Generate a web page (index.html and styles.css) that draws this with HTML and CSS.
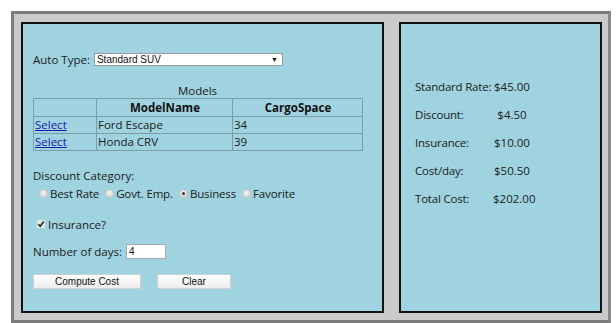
FILE: index.html
```html
<!DOCTYPE html>
<html>
<head>
<meta charset="utf-8">
<link rel="stylesheet" href="styles.css">
</head>
<body>
<div class="frame">
  <div class="panel left">
    <div class="auto-row">
      <span class="lbl">Auto Type:</span>
      <div class="select"><span>Standard SUV</span><span class="arrow">▼</span></div>
    </div>
    <div class="caption">Models</div>
    <table class="models">
      <colgroup><col class="c1"><col class="c2"><col class="c3"></colgroup>
      <tr class="head"><th></th><th>ModelName</th><th>CargoSpace</th></tr>
      <tr><td><a href="#">Select</a></td><td>Ford Escape</td><td>34</td></tr>
      <tr><td><a href="#">Select</a></td><td>Honda CRV</td><td>39</td></tr>
    </table>
    <div class="disc-label">Discount Category:</div>
    <div class="radios">
      <span class="radio"></span><span class="rtext">Best Rate</span>
      <span class="radio"></span><span class="rtext">Govt. Emp.</span>
      <span class="radio on"></span><span class="rtext">Business</span>
      <span class="radio"></span><span class="rtext">Favorite</span>
    </div>
    <div class="ins-row">
      <span class="check"><svg width="8" height="8" viewBox="0 0 8 8"><path d="M1.3 4.2 L3.2 6.2 L6.8 1.5" fill="none" stroke="#222" stroke-width="1.6"/></svg></span>
      <span>Insurance?</span>
    </div>
    <div class="days-row">
      <span>Number of days:</span>
      <div class="input">4</div>
    </div>
    <div class="btn-row">
      <div class="btn compute">Compute Cost</div>
      <div class="btn clear">Clear</div>
    </div>
  </div>
  <div class="panel right">
    <div class="costs">
      <span>Standard Rate:</span><span class="val">$45.00</span>
      <span>Discount:</span><span class="val">$4.50</span>
      <span>Insurance:</span><span class="val">$10.00</span>
      <span>Cost/day:</span><span class="val">$50.50</span>
      <span>Total Cost:</span><span class="val">$202.00</span>
    </div>
  </div>
</div>
</body>
</html>
```
FILE: styles.css
```css
html, body { margin: 0; padding: 0; background: #fff; }
body {
  font-family: "Open Sans", "Noto Sans", sans-serif;
  font-size: 11.5px;
  color: #202020;
}
.frame {
  margin: 11px 0 0 11px;
  width: 600px;
  height: 312px;
  box-sizing: border-box;
  border: 3px solid #7c7c7c;
  border-right-color: #8a8a8a;
  background: #cacaca;
  padding: 8px 6px 0 7px;
  display: flex;
  gap: 15px;
}
.panel {
  background: #9fd3e0;
  border: 2px solid #111;
  height: 291px;
  box-sizing: border-box;
  flex: none;
}
.left { width: 363px; padding: 27px 0 0 10px; }
.right { width: 203px; padding: 49px 0 0 14px; }

.auto-row { display: flex; align-items: center; height: 16px; }
.auto-row .lbl { margin-right: 4px; }
.select {
  width: 189px; height: 13px; box-sizing: border-box;
  background: #fff; border: 1px solid #9a9a9a;
  display: flex; align-items: center; justify-content: space-between;
  font-family: "Liberation Sans", Arial, sans-serif; font-size: 10px; color: #111;
  padding: 0 4px 0 2px;
}
.arrow { font-size: 7px; }

.caption { margin-top: 17px; height: 14px; line-height: 14px; width: 329px; text-align: center; }
.models {
  border-collapse: collapse; width: 329px; table-layout: fixed;
  border: 1px solid #7d9cab;
}
.models col.c1 { width: 63px; }
.models col.c2 { width: 136px; }
.models col.c3 { width: 130px; }
.models th, .models td {
  border: 1px solid #7d9cab; padding: 0 0 0 1px; text-align: left;
  height: 16px; line-height: 16px; font-size: 11.5px;
}
.models tr.head th { height: 17px; font-weight: bold; text-align: center; color: #111; }
.models a { color: #1c1ca8; text-decoration: underline; }

.disc-label { margin-top: 17px; height: 16px; line-height: 16px; }
.radios { margin-top: 1px; height: 16px; display: flex; align-items: center; padding-left: 6px; white-space: nowrap; }
.radio {
  width: 9px; height: 9px; box-sizing: border-box; border-radius: 50%;
  background: radial-gradient(circle at 50% 40%, #f4f4f4, #cfcfcf);
  border: 1px solid #c4c4c4; margin-right: 2px; position: relative; flex: none;
}
.radio.on::after {
  content: ""; position: absolute; left: 2px; top: 2px; width: 3px; height: 3px;
  border-radius: 50%; background: #333;
}
.rtext { margin-right: 6px; letter-spacing: -0.15px; }
.ins-row { margin-top: 15px; height: 16px; display: flex; align-items: center; padding-left: 4px; }
.check {
  width: 8px; height: 8px; display: inline-flex; background: #e6e6e6;
  margin-right: 3px;
}
.days-row { margin-top: 11px; height: 16px; display: flex; align-items: center; }
.input {
  margin-left: 4px; width: 40px; height: 15px; box-sizing: border-box;
  background: #fff; border: 1px solid #a9a9a9;
  font-family: "Liberation Sans", Arial, sans-serif; font-size: 10px; color: #111;
  padding-left: 2px; line-height: 13px;
}
.btn-row { margin-top: 15px; display: flex; gap: 16px; }
.btn {
  height: 15px; box-sizing: border-box; border: 1px solid #cfcfcf;
  background: linear-gradient(#ffffff, #ececec);
  font-family: "Liberation Sans", Arial, sans-serif; font-size: 10px; color: #111;
  text-align: center; line-height: 13px;
}
.compute { width: 108px; }
.clear { width: 74px; }

.costs {
  display: grid; grid-template-columns: 78px 38px;
  grid-auto-rows: 27.8px; align-items: center; white-space: nowrap;
}
.costs > span:nth-child(odd) { letter-spacing: -0.2px; }
.costs .val { text-align: center; }
```
